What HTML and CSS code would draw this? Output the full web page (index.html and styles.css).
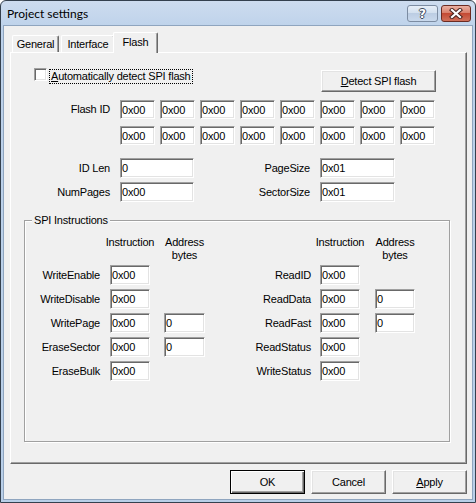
FILE: index.html
```html
<!DOCTYPE html>
<html>
<head>
<meta charset="utf-8">
<title>Project settings</title>
<link rel="stylesheet" href="styles.css">
</head>
<body>
<div class="window">
  <div class="titlebar">
    <span class="title">Project settings</span>
    <div class="caption-buttons">
      <span class="cap-btn help">?</span>
      <span class="cap-btn close">
        <svg width="14" height="11" viewBox="0 0 14 11">
          <path d="M3 2 L11 9 M11 2 L3 9" stroke="#4a2420" stroke-width="4.2" stroke-linecap="square" fill="none"/>
          <path d="M3 2 L11 9 M11 2 L3 9" stroke="#fff" stroke-width="2.2" stroke-linecap="square" fill="none"/>
        </svg>
      </span>
    </div>
  </div>
  <div class="client">
    <div class="tabs">
      <div class="tab t-general">General</div>
      <div class="tab t-interface">Interface</div>
      <div class="tab active">Flash</div>
    </div>
    <div class="panel">
      <div class="detect-row">
        <label class="check"><span class="checkbox"></span><span class="focus"><u>A</u>utomatically detect SPI flash</span></label>
        <button class="btn detect"><u>D</u>etect SPI flash</button>
      </div>
      <div class="flashid">
        <span class="lbl fid">Flash ID</span>
        <input class="ed" value="0x00" readonly><input class="ed" value="0x00" readonly><input class="ed" value="0x00" readonly><input class="ed" value="0x00" readonly><input class="ed" value="0x00" readonly><input class="ed" value="0x00" readonly><input class="ed" value="0x00" readonly><input class="ed" value="0x00" readonly>
        <input class="ed" value="0x00" readonly><input class="ed" value="0x00" readonly><input class="ed" value="0x00" readonly><input class="ed" value="0x00" readonly><input class="ed" value="0x00" readonly><input class="ed" value="0x00" readonly><input class="ed" value="0x00" readonly><input class="ed" value="0x00" readonly>
      </div>
      <div class="params">
        <span class="lbl">ID Len</span><input class="ed" value="0" readonly>
        <span class="lbl">PageSize</span><input class="ed" value="0x01" readonly>
        <span class="lbl">NumPages</span><input class="ed" value="0x00" readonly>
        <span class="lbl">SectorSize</span><input class="ed" value="0x01" readonly>
      </div>
      <div class="group">
        <div class="group-title">SPI Instructions</div>
        <div class="spi">
          <span></span><span class="hdr">Instruction</span><span class="hdr wide">Address<br>bytes</span>
          <span></span><span class="hdr">Instruction</span><span class="hdr">Address<br>bytes</span>

          <span class="lbl">WriteEnable</span><input class="ed s" value="0x00" readonly><span></span>
          <span class="lbl r">ReadID</span><input class="ed s" value="0x00" readonly><span></span>

          <span class="lbl">WriteDisable</span><input class="ed s" value="0x00" readonly><span></span>
          <span class="lbl r">ReadData</span><input class="ed s" value="0x00" readonly><input class="ed s" value="0" readonly>

          <span class="lbl">WritePage</span><input class="ed s" value="0x00" readonly><input class="ed a" value="0" readonly>
          <span class="lbl r">ReadFast</span><input class="ed s" value="0x00" readonly><input class="ed s" value="0" readonly>

          <span class="lbl">EraseSector</span><input class="ed s" value="0x00" readonly><input class="ed a" value="0" readonly>
          <span class="lbl r">ReadStatus</span><input class="ed s" value="0x00" readonly><span></span>

          <span class="lbl">EraseBulk</span><input class="ed s" value="0x00" readonly><span></span>
          <span class="lbl r">WriteStatus</span><input class="ed s" value="0x00" readonly><span></span>
        </div>
      </div>
    </div>
    <div class="dlg-buttons">
      <button class="btn default">OK</button>
      <button class="btn">Cancel</button>
      <button class="btn"><u>A</u>pply</button>
    </div>
  </div>
</div>
</body>
</html>
```
FILE: styles.css
```css
* { box-sizing: border-box; }

html, body {
  margin: 0;
  padding: 0;
  background: #fff;
}

body {
  font-family: "Liberation Sans", Arial, sans-serif;
  font-size: 11px;
  letter-spacing: -0.2px;
  color: #000;
}

.window {
  width: 476px;
  height: 503px;
  border: 1px solid #34404e;
  border-radius: 6px 6px 0 0;
  background: linear-gradient(#cddcef, #bcd1ea 30px, #b9cfe8);
  padding: 0 2px 2px;
  display: flex;
  flex-direction: column;
}

.titlebar {
  flex: none;
  height: 24px;
  display: flex;
  align-items: flex-start;
}

.title {
  font-family: Lato, "Open Sans", sans-serif;
  font-size: 12px;
  letter-spacing: 0;
  line-height: 16px;
  margin: 5px 0 0 4px;
  color: #000;
}

.caption-buttons {
  margin: 4px 2px 0 auto;
  display: flex;
  gap: 3px;
}

.cap-btn {
  height: 17px;
  border-radius: 3px;
  border: 1px solid;
  display: flex;
  align-items: center;
  justify-content: center;
}

.help {
  width: 31px;
  border-color: #7c8ca2;
  background: linear-gradient(#e6eef8 0%, #d3e0ef 45%, #bccde3 50%, #c9d9ed 100%);
  font-family: "DejaVu Sans", sans-serif;
  font-weight: bold;
  font-size: 12px;
  letter-spacing: 0;
  color: #fff;
  text-shadow: 1px 0 #3d4a5c, -1px 0 #3d4a5c, 0 1px #3d4a5c, 0 -1px #3d4a5c;
}

.close {
  width: 30px;
  border-color: #6b2b22;
  background: linear-gradient(#eab0a2 0%, #d9806c 45%, #c44a34 50%, #d0705a 100%);
}

.client {
  flex: 1;
  background: #f0f0f0;
  border: 1px solid #8fa5bf;
  padding-top: 6px;
  display: flex;
  flex-direction: column;
}

/* tabs */
.tabs {
  display: flex;
  align-items: flex-end;
  height: 20px;
  margin-left: 8px;
}

.tab {
  height: 17px;
  border-top: 1px solid #fff;
  border-left: 1px solid #fff;
  border-right: 1px solid #696969;
  box-shadow: inset -1px 0 0 #a0a0a0;
  border-radius: 2px 2px 0 0;
  display: flex;
  align-items: center;
  justify-content: center;
  padding-bottom: 1px;
}

.t-general { width: 47px; margin-right: 2px; }
.t-interface { width: 54px; }

.tab.active {
  position: relative;
  width: 45px;
  height: 21px;
  margin-left: -2px;
  margin-bottom: -1px;
  background: #f0f0f0;
  padding-bottom: 2px;
}

/* panel */
.panel {
  margin-left: 6px;
  width: 457px;
  height: 412px;
  border: 1px solid;
  border-color: #fff #696969 #696969 #fff;
  box-shadow: inset -1px -1px 0 #a0a0a0;
}

.detect-row {
  display: flex;
  align-items: flex-start;
  margin: 15px 30px 0 23px;
}

.check {
  display: flex;
  align-items: flex-start;
}

.checkbox {
  width: 13px;
  height: 13px;
  background: #fff;
  border: 1px solid;
  border-color: #a0a0a0 #fff #fff #a0a0a0;
  box-shadow: inset 1px 1px 0 #696969, inset -1px -1px 0 #e3e3e3;
}

.focus {
  margin: 1px 0 0 2px;
  border: 1px dotted #000;
  padding: 0 1px;
  line-height: 13px;
}

.btn {
  width: 75px;
  height: 24px;
  padding: 0;
  background: #f0f0f0;
  border: 1px solid;
  border-color: #fff #696969 #696969 #fff;
  box-shadow: inset -1px -1px 0 #a0a0a0, inset 1px 1px 0 #e3e3e3;
  font: inherit;
  letter-spacing: inherit;
  color: #000;
}

.btn.default {
  border-color: #000;
  box-shadow: inset 1px 1px 0 #fff, inset -1px -1px 0 #696969, inset -2px -2px 0 #a0a0a0;
}

.detect {
  width: 115px;
  height: 22px;
  margin: 2px 0 0 auto;
}

.ed {
  display: block;
  width: 100%;
  height: 20px;
  margin: 0;
  padding: 0 1px;
  background: #fff;
  border: 1px solid;
  border-color: #a0a0a0 #fff #fff #a0a0a0;
  box-shadow: inset 1px 1px 0 #696969, inset -1px -1px 0 #e3e3e3;
  font: inherit;
  letter-spacing: inherit;
  color: #000;
  outline: none;
}

.lbl {
  text-align: right;
  padding-right: 5px;
  line-height: 20px;
  white-space: nowrap;
}

.flashid {
  display: grid;
  grid-template-columns: 104px repeat(8, 35px);
  grid-auto-rows: 19px;
  column-gap: 5px;
  row-gap: 7px;
  margin-top: 8px;
}

.flashid .ed { height: 19px; }

.fid {
  grid-row: span 2;
  line-height: 19px;
  align-self: start;
}

.params {
  display: grid;
  grid-template-columns: 104px 74px 116px 75px;
  grid-auto-rows: 20px;
  column-gap: 5px;
  row-gap: 4px;
  margin-top: 13px;
}

/* group box */
.group {
  margin: 18px 0 0 13px;
  width: 426px;
  height: 222px;
  border: 1px solid #a0a0a0;
  box-shadow: inset 1px 1px 0 #fff, 1px 1px 0 #fff;
}

.group-title {
  width: fit-content;
  margin: -7px 0 0 7px;
  padding: 0 2px;
  line-height: 13px;
  background: #f0f0f0;
}

.spi {
  display: grid;
  grid-template-columns: 85px 54px 41px 115px 55px 40px;
  grid-template-rows: 25px repeat(5, 20px);
  row-gap: 4px;
  margin-top: 9px;
}

.spi .lbl { padding-right: 10px; }
.spi .lbl.r { padding-right: 9px; }

.hdr {
  width: 40px;
  display: flex;
  justify-content: center;
  text-align: center;
  white-space: nowrap;
  line-height: 13px;
}

.hdr.wide { width: 41px; }

.ed.s { width: 40px; }
.ed.a { width: 41px; }

/* dialog buttons */
.dlg-buttons {
  display: flex;
  justify-content: flex-end;
  gap: 6px;
  margin: 6px 5px 0 0;
}
```
